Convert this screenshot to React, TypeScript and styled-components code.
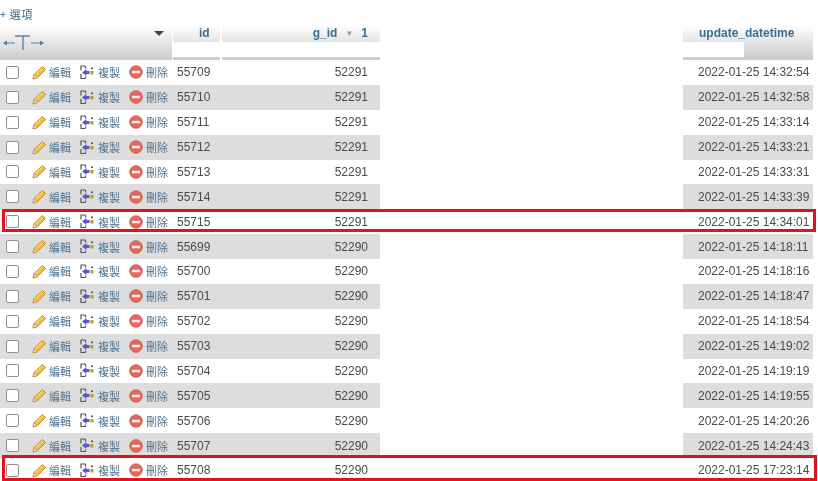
import React from "react";
import styled, { createGlobalStyle } from "styled-components";

const Global = createGlobalStyle`
  html, body { margin: 0; padding: 0; background: #fff; }
  body { width: 818px; height: 481px; overflow: hidden; font-family: "Liberation Sans", "Noto Sans CJK TC", sans-serif; font-size: 12px; color: #4a4a4a; }
`;

const Page = styled.div`
  position: relative;
  width: 818px;
  height: 481px;
  overflow: hidden;
  filter: blur(0.35px);
`;

const Options = styled.div`
  height: 25px;
  padding: 7px 0 0 0;
  box-sizing: border-box;
  font-size: 11px;
  line-height: 14px;
  letter-spacing: 0.6px;
  color: #3d6a8a;
  font-family: "Noto Sans CJK TC", sans-serif;
`;

const HeadRow = styled.div`
  display: grid;
  grid-template-columns: 173px 47px 2px 158px 303px 130px;
  height: 35px;
`;

const ActionHead = styled.div`
  position: relative;
  background: linear-gradient(#fff, #ccc);
  margin-right: 1px;
`;

const ResizeGlyph = styled.svg`
  position: absolute;
  left: 3px;
  top: 9px;
`;

const Caret = styled.div`
  position: absolute;
  left: 154px;
  top: 6px;
  width: 0;
  height: 0;
  border-left: 5px solid transparent;
  border-right: 5px solid transparent;
  border-top: 5px solid #444;
`;

const HeadCell = styled.div`
  display: flex;
  flex-direction: column;
  background: linear-gradient(#fff, #ccc 95%);
`;

const HeadTitle = styled.div<{ $pad: string; $align?: string }>`
  height: 17px;
  box-sizing: border-box;
  padding: ${(p) => p.$pad};
  text-align: ${(p) => p.$align || "left"};
  font-weight: bold;
  font-size: 12px;
  line-height: 15px;
  color: #3a7094;
  white-space: nowrap;
`;

const HeadFilter = styled.div<{ $w?: string }>`
  height: 15px;
  width: ${(p) => p.$w || "100%"};
  background: #fff;
`;

const Gap = styled.div``;

const SortMark = styled.span`
  color: #999;
  font-weight: normal;
  font-size: 8px;
  margin: 0 8px 0 8px;
  vertical-align: 1px;
`;

const Row = styled.div`
  display: grid;
  grid-template-columns: 173px 207px 303px 130px;
  height: 24.875px;
  align-items: stretch;
`;

const Cell = styled.div<{ $alt: boolean }>`
  background: ${(p) => (p.$alt ? "#ddd" : "#fff")};
  display: flex;
  align-items: center;
  white-space: nowrap;
`;

const ActionsCell = styled(Cell)`
  padding-left: 6px;
  box-sizing: border-box;
`;

const Check = styled.span`
  width: 11px;
  height: 11px;
  border: 1px solid #8f8f8f;
  border-radius: 2px;
  background: #fff;
  flex: none;
  margin-right: 13px;
`;

const Action = styled.span<{ $w: number; $gap: number }>`
  display: inline-flex;
  align-items: center;
  width: ${(p) => p.$w}px;
  flex: none;
  color: #4f7390;
  font-family: "Noto Sans CJK TC", sans-serif;
  font-size: 11px;
  svg { flex: none; margin-right: ${(p) => p.$gap}px; }
`;

const IdCell = styled.div`
  flex: 1;
  display: flex;
  justify-content: space-between;
  padding: 0 12px 0 4px;
`;

const DateCell = styled(Cell)`
  padding-left: 15px;
`;

const Highlight = styled.div<{ $top: number; $h: number; $w: number }>`
  position: absolute;
  left: 2px;
  top: ${(p) => p.$top}px;
  width: ${(p) => p.$w}px;
  height: ${(p) => p.$h}px;
  box-sizing: border-box;
  border: 3px solid #e8101c;
  pointer-events: none;
`;

const Pencil = () => (
  <svg width="15" height="15" viewBox="0 0 15 15">
    <path d="M1 14 L2 9.5 L10.5 1.5 L13.5 4.5 L5.5 12.6 Z" fill="#f0c040" stroke="#c98a2a" strokeWidth="1" strokeLinejoin="round" />
    <path d="M1 14 L2 9.5 L5.5 12.6 Z" fill="#f2d8a8" stroke="#b88a50" strokeWidth="0.6" />
    <path d="M3.5 9.5 L10.5 3" stroke="#fbe9a0" strokeWidth="1" />
  </svg>
);

const CopyIcon = () => (
  <svg width="14" height="15" viewBox="0 0 14 15">
    <path d="M5.5 1 H1 V5.5 M1 9 V13.5 H5.5" fill="none" stroke="#555" strokeWidth="1.2" />
    <path d="M5.5 1 V3.5 M5.5 11.5 V13.5" fill="none" stroke="#555" strokeWidth="1.2" />
    <path d="M2 7.5 L6.5 4 V6 H9.5 V9 H6.5 V11 Z" fill="#5f55cc" />
    <rect x="10.5" y="6" width="3" height="3.5" fill="#c49a28" />
    <rect x="11" y="2.5" width="2" height="1.6" fill="#555" />
  </svg>
);

const DeleteIcon = () => (
  <svg width="14" height="14" viewBox="0 0 14 14">
    <circle cx="7" cy="7" r="6.3" fill="#e4685c" stroke="#c9574b" strokeWidth="0.8" />
    <rect x="3" y="5.8" width="8" height="2.5" fill="#f6eeee" />
  </svg>
);

const rows: [string, string, string][] = [
  ["55709", "52291", "2022-01-25 14:32:54"],
  ["55710", "52291", "2022-01-25 14:32:58"],
  ["55711", "52291", "2022-01-25 14:33:14"],
  ["55712", "52291", "2022-01-25 14:33:21"],
  ["55713", "52291", "2022-01-25 14:33:31"],
  ["55714", "52291", "2022-01-25 14:33:39"],
  ["55715", "52291", "2022-01-25 14:34:01"],
  ["55699", "52290", "2022-01-25 14:18:11"],
  ["55700", "52290", "2022-01-25 14:18:16"],
  ["55701", "52290", "2022-01-25 14:18:47"],
  ["55702", "52290", "2022-01-25 14:18:54"],
  ["55703", "52290", "2022-01-25 14:19:02"],
  ["55704", "52290", "2022-01-25 14:19:19"],
  ["55705", "52290", "2022-01-25 14:19:55"],
  ["55706", "52290", "2022-01-25 14:20:26"],
  ["55707", "52290", "2022-01-25 14:24:43"],
  ["55708", "52290", "2022-01-25 17:23:14"],
];

export default function App() {
  return (
    <Page>
      <Global />
      <Options>+ 選項</Options>
      <HeadRow>
        <ActionHead>
          <ResizeGlyph width="44" height="18" viewBox="0 0 44 18">
            <path d="M1 9 H12 M28 9 H40" fill="none" stroke="#4f7f9f" strokeWidth="1" />
            <path d="M0 9 L4 6.5 V11.5 Z M41 9 L37 6.5 V11.5 Z" fill="#4f7f9f" />
            <path d="M12 2 H27 M20 2 V16" fill="none" stroke="#5a86a4" strokeWidth="1.4" />
          </ResizeGlyph>
          <Caret />
        </ActionHead>
        <HeadCell>
          <HeadTitle $pad="1px 0 0 26px">id</HeadTitle>
          <HeadFilter />
        </HeadCell>
        <Gap />
        <HeadCell>
          <HeadTitle $pad="1px 12px 0 0" $align="right">g_id<SortMark>▼</SortMark>1</HeadTitle>
          <HeadFilter />
        </HeadCell>
        <Gap />
        <HeadCell>
          <HeadTitle $pad="1px 0 0 16px">update_datetime</HeadTitle>
          <HeadFilter $w="61px" />
        </HeadCell>
      </HeadRow>
      {rows.map(([id, gid, date], i) => {
        const alt = i % 2 === 1;
        return (
          <Row key={id}>
            <ActionsCell $alt={alt}>
              <Check />
              <Action $w={48} $gap={2}><Pencil />編輯</Action>
              <Action $w={49} $gap={4}><CopyIcon />複製</Action>
              <Action $w={44} $gap={3}><DeleteIcon />刪除</Action>
            </ActionsCell>
            <Cell $alt={alt}>
              <IdCell><span>{id}</span><span>{gid}</span></IdCell>
            </Cell>
            <Gap />
            <DateCell $alt={alt}>{date}</DateCell>
          </Row>
        );
      })}
      <Highlight $top={209} $h={23} $w={814} />
      <Highlight $top={455} $h={26} $w={815} />
    </Page>
  );
}
